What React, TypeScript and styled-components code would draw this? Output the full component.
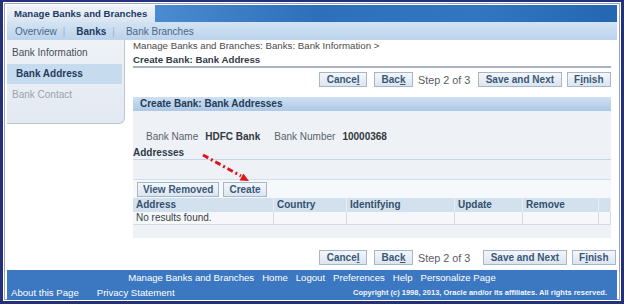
import React from "react";
import styled, { createGlobalStyle } from "styled-components";

const GlobalStyle = createGlobalStyle`
  html, body { margin: 0; padding: 0; background: #ffffff; }
  body { font-family: "Liberation Sans", Arial, sans-serif; }
  * { box-sizing: border-box; }
`;

const Frame = styled.div`
  position: relative;
  width: 624px;
  height: 304px;
  border: 3px solid #25307a;
  border-top-width: 2px;
  padding: 3px 4px 1px 4px;
  background: #ffffff;
  box-shadow: inset 0 0 0 1px #ffffff, inset 0 0 0 2px #9aa5c2;
  display: flex;
  flex-direction: column;
`;

const Header = styled.div`
  display: flex;
  height: 17px;
  flex: none;
`;

const AppTab = styled.div`
  width: 148px;
  padding-left: 7px;
  line-height: 17px;
  font-size: 9.6px;
  font-weight: bold;
  color: #1c3a66;
  background: linear-gradient(180deg, #f1f5f9 0%, #d9e4ef 100%);
  white-space: nowrap;
`;

const BlueBar = styled.div`
  flex: 1;
  background: linear-gradient(90deg, #4a8bd1 0%, #2d6fba 35%, #3276c1 70%, #2466b1 100%);
`;

const TabBar = styled.div`
  display: flex;
  align-items: center;
  height: 18px;
  flex: none;
  padding-left: 8px;
  font-size: 10px;
  color: #4b6888;
  background: linear-gradient(180deg, #d3e3f3 0%, #bcd3ec 100%);
`;

const TabItem = styled.span<{ $active?: boolean }>`
  font-weight: ${(p) => (p.$active ? "bold" : "normal")};
  color: ${(p) => (p.$active ? "#1f3b60" : "#4b6888")};
`;

const TabSep = styled.span`
  color: #9db4cd;
  margin: 0 11px 0 6px;
`;

const Body = styled.div`
  display: flex;
  height: 230px;
  flex: none;
`;

const Nav = styled.div`
  width: 118px;
  height: 84px;
  padding-top: 3px;
  background: linear-gradient(180deg, #eef2f7 0%, #e3e9f1 100%);
  border-right: 1px solid #bcc6d2;
  border-bottom: 1px solid #bcc6d2;
  border-bottom-right-radius: 6px;
  display: flex;
  flex-direction: column;
  gap: 1px;
`;

const NavItem = styled.div<{ $state: "normal" | "active" | "disabled" }>`
  height: 20px;
  line-height: 20px;
  font-size: 10px;
  padding-left: ${(p) => (p.$state === "active" ? "9px" : "5px")};
  font-weight: ${(p) => (p.$state === "active" ? "bold" : "normal")};
  color: ${(p) =>
    p.$state === "active" ? "#1f3b62" : p.$state === "disabled" ? "#9aa3ad" : "#4a4f57"};
  background: ${(p) => (p.$state === "active" ? "#c7dbee" : "transparent")};
  margin-right: ${(p) => (p.$state === "active" ? "2px" : "0")};
`;

const Main = styled.div`
  flex: 1;
  margin-left: 8px;
  padding-right: 6px;
  display: flex;
  flex-direction: column;
`;

const Breadcrumb = styled.div`
  font-size: 9.7px;
  line-height: 11px;
  color: #4a4a4a;
`;

const PageTitle = styled.div`
  margin-top: 2px;
  font-size: 9.7px;
  line-height: 13px;
  color: #333c47;
  font-weight: bold;
  border-bottom: 2px solid #a9b2be;
`;

const ButtonRow = styled.div<{ $top: number; $shift?: number }>`
  display: flex;
  justify-content: flex-end;
  align-items: center;
  margin-top: ${(p) => p.$top}px;
  margin-right: ${(p) => -(p.$shift ?? 0)}px;
  height: 15px;
`;

const Btn = styled.button<{ $ml?: number }>`
  height: 15px;
  padding: 0 6.5px;
  margin-left: ${(p) => p.$ml ?? 0}px;
  font-family: "Liberation Sans", Arial, sans-serif;
  font-size: 10px;
  font-weight: bold;
  line-height: 13px;
  color: #3b5876;
  background: linear-gradient(180deg, #f3f7fb 0%, #dbe5f0 100%);
  border: 1px solid #a8b7c8;
  border-radius: 0;
  cursor: pointer;
  & u { text-decoration: underline; }
`;

const SmallBtn = styled(Btn)`
  padding: 0 5px;
`;

const StepText = styled.span<{ $ml: number; $mr: number }>`
  font-size: 10.8px;
  color: #555c66;
  margin-left: ${(p) => p.$ml}px;
  margin-right: ${(p) => p.$mr}px;
`;

const RegionHeader = styled.div`
  margin-top: 10px;
  height: 14px;
  line-height: 14px;
  padding-left: 7px;
  font-size: 10px;
  font-weight: bold;
  color: #243c58;
  background: linear-gradient(180deg, #cfe0f2 0%, #adc8e6 100%);
`;

const Region = styled.div`
  background: #eef2f7;
  padding-bottom: 13px;
`;

const InfoRow = styled.div`
  display: flex;
  align-items: center;
  height: 14px;
  margin-top: 18px;
  padding-left: 13px;
  font-size: 10px;
`;

const InfoLabel = styled.span<{ $ml?: number }>`
  color: #5b626b;
  margin-left: ${(p) => p.$ml ?? 0}px;
`;

const InfoValue = styled.span`
  color: #333840;
  font-weight: bold;
  font-size: 10px;
  margin-left: 7px;
`;

const SubHeader = styled.div`
  margin-top: 3px;
  height: 14px;
  line-height: 13px;
  font-size: 10px;
  font-weight: bold;
  color: #2f3a47;
  border-bottom: 1px solid #c5d5e7;
`;

const ControlBar = styled.div`
  margin-top: 19px;
  height: 19px;
  display: flex;
  align-items: center;
  gap: 4px;
  padding-left: 4px;
  background: #f6f9fc;
  border-top: 1px solid #d3dfeb;
`;

const Table = styled.div`
  display: grid;
  grid-template-columns: 141px 73px 108px 68px 76px 12px;
`;

const HeadCell = styled.div`
  height: 14px;
  line-height: 14px;
  padding-left: 3px;
  font-size: 10px;
  font-weight: bold;
  color: #34506c;
  background: #d3e1ef;
  border-right: 1px solid #e6edf5;
  white-space: nowrap;
`;

const Cell = styled.div`
  height: 13px;
  line-height: 12px;
  padding-left: 3px;
  font-size: 10px;
  color: #3a3f46;
  background: #f5f7fa;
  border-right: 1px solid #d3dbe4;
  border-bottom: 1px solid #d3dbe4;
  white-space: nowrap;
`;

const Footer = styled.div`
  height: 30px;
  flex: none;
  background: #3b78c1;
  color: #ffffff;
  padding-top: 1px;
  font-size: 9.6px;
`;

const FooterLinks = styled.div`
  display: flex;
  justify-content: center;
  gap: 8px;
  height: 14px;
  line-height: 14px;
`;

const FooterBottom = styled.div`
  display: flex;
  align-items: center;
  height: 14px;
  padding-left: 4px;
  padding-right: 10px;
`;

const FooterLeft = styled.div`
  display: flex;
  gap: 18px;
`;

const Copyright = styled.div`
  margin-left: auto;
  font-size: 7.5px;
  font-weight: bold;
  color: #f2f6fb;
`;

const Arrow = styled.svg`
  position: absolute;
  left: 196px;
  top: 148px;
  overflow: visible;
`;

function Actions({ top, shift, stepGap }: { top: number; shift?: number; stepGap: number }) {
  return (
    <ButtonRow $top={top} $shift={shift}>
      <Btn>Cance<u>l</u></Btn>
      <Btn $ml={7}>Bac<u>k</u></Btn>
      <StepText $ml={5} $mr={stepGap}>Step 2 of 3</StepText>
      <Btn>Save and Next</Btn>
      <Btn $ml={5}>F<u>i</u>nish</Btn>
    </ButtonRow>
  );
}

export default function App() {
  const cols = ["Address", "Country", "Identifying", "Update", "Remove", ""];
  return (
    <>
      <GlobalStyle />
      <Frame>
        <Header>
          <AppTab>Manage Banks and Branches</AppTab>
          <BlueBar />
        </Header>
        <TabBar>
          <TabItem>Overview</TabItem>
          <TabSep>|</TabSep>
          <TabItem $active>Banks</TabItem>
          <TabSep>|</TabSep>
          <TabItem>Bank Branches</TabItem>
        </TabBar>
        <Body>
          <Nav>
            <NavItem $state="normal">Bank Information</NavItem>
            <NavItem $state="active">Bank Address</NavItem>
            <NavItem $state="disabled">Bank Contact</NavItem>
          </Nav>
          <Main>
            <Breadcrumb>Manage Banks and Branches: Banks: Bank Information &gt;</Breadcrumb>
            <PageTitle>Create Bank: Bank Address</PageTitle>
            <Actions top={4} stepGap={8} />
            <RegionHeader>Create Bank: Bank Addresses</RegionHeader>
            <Region>
              <InfoRow>
                <InfoLabel>Bank Name</InfoLabel>
                <InfoValue>HDFC Bank</InfoValue>
                <InfoLabel $ml={14}>Bank Number</InfoLabel>
                <InfoValue>10000368</InfoValue>
              </InfoRow>
              <SubHeader>Addresses</SubHeader>
              <ControlBar>
                <SmallBtn>View Removed</SmallBtn>
                <SmallBtn>Create</SmallBtn>
              </ControlBar>
              <Table>
                {cols.map((c, i) => (
                  <HeadCell key={i}>{c}</HeadCell>
                ))}
                <Cell>No results found.</Cell>
                <Cell />
                <Cell />
                <Cell />
                <Cell />
                <Cell />
              </Table>
            </Region>
            <Actions top={12} shift={5} stepGap={13} />
          </Main>
        </Body>
        <Footer>
          <FooterLinks>
            <span>Manage Banks and Branches</span>
            <span>Home</span>
            <span>Logout</span>
            <span>Preferences</span>
            <span>Help</span>
            <span>Personalize Page</span>
          </FooterLinks>
          <FooterBottom>
            <FooterLeft>
              <span>About this Page</span>
              <span>Privacy Statement</span>
            </FooterLeft>
            <Copyright>Copyright (c) 1998, 2013, Oracle and/or its affiliates. All rights reserved.</Copyright>
          </FooterBottom>
        </Footer>
        <Arrow width="56" height="36" viewBox="0 0 56 36">
          <line x1="4" y1="5" x2="42" y2="26" stroke="#e0141c" strokeWidth="3" strokeDasharray="6 3 2 3" />
          <polygon points="50,31 40.6,30.6 44.4,23.6" fill="#e0141c" />
        </Arrow>
      </Frame>
    </>
  );
}
